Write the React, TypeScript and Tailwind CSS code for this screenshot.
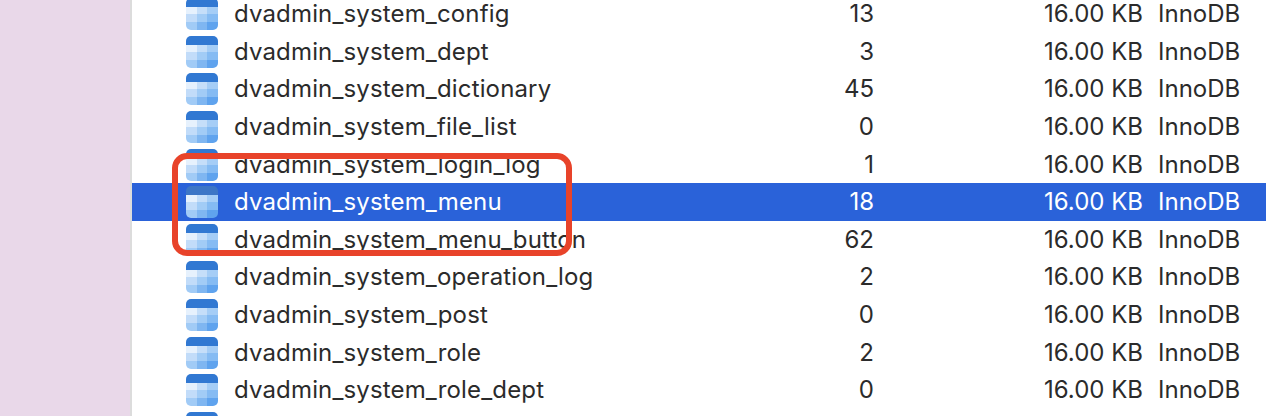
import React from 'react';

const tables = [
    { name: 'dvadmin_system_config', rows: 13 },
    { name: 'dvadmin_system_dept', rows: 3 },
    { name: 'dvadmin_system_dictionary', rows: 45 },
    { name: 'dvadmin_system_file_list', rows: 0 },
    { name: 'dvadmin_system_login_log', rows: 1 },
    { name: 'dvadmin_system_menu', rows: 18, selected: true },
    { name: 'dvadmin_system_menu_button', rows: 62 },
    { name: 'dvadmin_system_operation_log', rows: 2 },
    { name: 'dvadmin_system_post', rows: 0 },
    { name: 'dvadmin_system_role', rows: 2 },
    { name: 'dvadmin_system_role_dept', rows: 0 },
    { name: '', rows: null },
];

const cells = ['#e6f1fd', '#c5def9', '#a5cdf6', '#c2dcf9', '#a2ccf6', '#85bbf3', '#a1cbf6', '#7fb6f1', '#5fa3ee'];

// table glyph, header band with a 3x3 grid below
const TableIcon = ({ selected }: { selected?: boolean }) => (
    <svg width="32" height="32" viewBox="0 0 32 32" className="shrink-0">
        <defs>
            <clipPath id={selected ? 'clip-sel' : 'clip-row'}>
                <rect width="32" height="32" rx="5" />
            </clipPath>
        </defs>
        <g clipPath={`url(#${selected ? 'clip-sel' : 'clip-row'})`}>
            <rect width="32" height="9" fill={selected ? '#3d76c6' : '#3178d2'} />
            {cells.map((fill, i) => (
                <rect
                    key={i}
                    x={(i % 3) * 10.67}
                    y={8.5 + Math.floor(i / 3) * 7.84}
                    width={i % 3 === 2 ? 10.67 : 11.2}
                    height={i > 5 ? 7.84 : 8.3}
                    fill={fill}
                    shapeRendering="crispEdges"
                />
            ))}
        </g>
    </svg>
);

export default function App() {
    return (
        <div className="relative flex h-[416px] w-[1266px] overflow-hidden bg-white font-['Inter','Liberation_Sans',sans-serif]">
            {/* sidebar edge */}
            <div className="h-full w-[132px] shrink-0 border-r-2 border-[#dcdcdc] bg-[#e9d8e9]" />

            {/* table list */}
            <div className="-mt-[4.5px] flex-1">
                {tables.map((t, index) => (
                    <div
                        key={index}
                        className={`flex h-[37.6px] items-center pl-[54px] text-[24px] ${
                            t.selected ? 'bg-[#2a62d9] text-white' : 'text-[#2b2b2b]'
                        }`}
                    >
                        <TableIcon selected={t.selected} />
                        <span className="ml-4 w-[607px] shrink-0 whitespace-nowrap tracking-[0.15px]">{t.name}</span>
                        {t.rows !== null && (
                            <>
                                <span className="w-[33px] shrink-0 text-right">{t.rows}</span>
                                <span className="w-[269px] shrink-0 text-right">16.00 KB</span>
                                <span className="ml-[15px] whitespace-nowrap">InnoDB</span>
                            </>
                        )}
                    </div>
                ))}
            </div>

            {/* red annotation box */}
            <div className="absolute left-[172px] top-[153px] h-[103px] w-[400px] rounded-[15px] border-[6px] border-[#e8432a]" />
        </div>
    );
}
